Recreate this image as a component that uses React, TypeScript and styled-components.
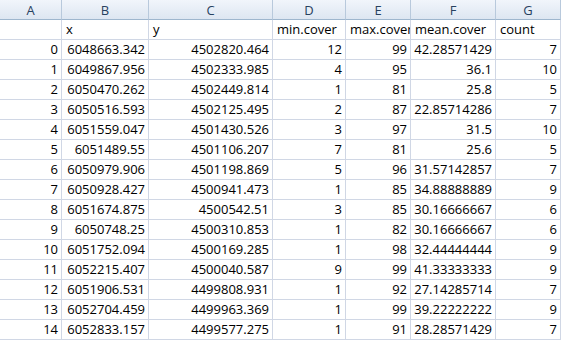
import React from "react";
import styled, { createGlobalStyle } from "styled-components";

type Align = "left" | "right" | "center";

const GlobalStyle = createGlobalStyle`
  html, body {
    margin: 0;
    padding: 0;
    background: #ffffff;
  }
`;

const COLUMNS = ["A", "B", "C", "D", "E", "F", "G"];
const WIDTHS = "62px 87px 124px 73px 65px 85px 65px";

const HEADINGS = ["", "x", "y", "min.cover", "max.cover", "mean.cover", "count"];

const ROWS: (string | number)[][] = [
  [0, "6048663.342", "4502820.464", 12, 99, "42.28571429", 7],
  [1, "6049867.956", "4502333.985", 4, 95, "36.1", 10],
  [2, "6050470.262", "4502449.814", 1, 81, "25.8", 5],
  [3, "6050516.593", "4502125.495", 2, 87, "22.85714286", 7],
  [4, "6051559.047", "4501430.526", 3, 97, "31.5", 10],
  [5, "6051489.55", "4501106.207", 7, 81, "25.6", 5],
  [6, "6050979.906", "4501198.869", 5, 96, "31.57142857", 7],
  [7, "6050928.427", "4500941.473", 1, 85, "34.88888889", 9],
  [8, "6051674.875", "4500542.51", 3, 85, "30.16666667", 6],
  [9, "6050748.25", "4500310.853", 1, 82, "30.16666667", 6],
  [10, "6051752.094", "4500169.285", 1, 98, "32.44444444", 9],
  [11, "6052215.407", "4500040.587", 9, 99, "41.33333333", 9],
  [12, "6051906.531", "4499808.931", 1, 92, "27.14285714", 7],
  [13, "6052704.459", "4499963.369", 1, 99, "39.22222222", 9],
  [14, "6052833.157", "4499577.275", 1, 91, "28.28571429", 7],
];

const Sheet = styled.div`
  display: grid;
  grid-template-columns: ${WIDTHS};
  grid-template-rows: 20px;
  grid-auto-rows: 20px;
  width: 561px;
  height: 345px;
  overflow: hidden;
  font-family: "Open Sans", "Liberation Sans", sans-serif;
  font-size: 13px;
  color: #000000;
`;

const ColumnHeader = styled.div`
  box-sizing: border-box;
  display: flex;
  align-items: center;
  justify-content: center;
  background: linear-gradient(#f1f5fb, #dde6f1);
  border-right: 1px solid #b8c9dc;
  border-bottom: 1px solid #9eb6ce;
  color: #27415f;
  font-size: 13px;
`;

const Cell = styled.div<{ $align: Align }>`
  box-sizing: border-box;
  display: flex;
  align-items: center;
  justify-content: ${(p) =>
    p.$align === "right" ? "flex-end" : p.$align === "center" ? "center" : "flex-start"};
  padding: 0 3px 0 4px;
  border-right: 1px solid #d0d7e5;
  border-bottom: 1px solid #d0d7e5;
  white-space: nowrap;
  overflow: hidden;
  line-height: 1;
`;

export default function App(): React.ReactElement {
  return (
    <>
      <GlobalStyle />
      <Sheet>
        {COLUMNS.map((c) => (
          <ColumnHeader key={c}>{c}</ColumnHeader>
        ))}
        {HEADINGS.map((h, i) => (
          <Cell key={`h${i}`} $align="left">
            {h}
          </Cell>
        ))}
        {ROWS.map((row) =>
          row.map((v, i) => (
            <Cell key={`${row[0]}-${i}`} $align="right">
              {v}
            </Cell>
          ))
        )}
      </Sheet>
    </>
  );
}
